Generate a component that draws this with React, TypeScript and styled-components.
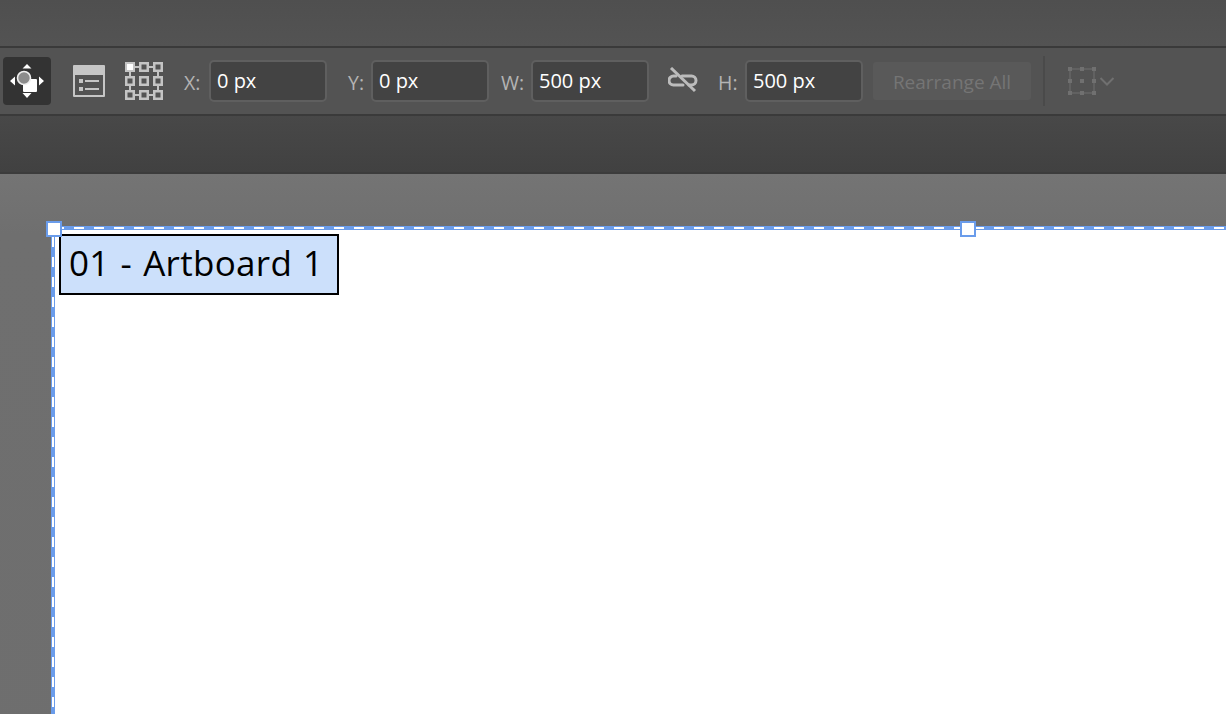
import React from "react";
import styled, { createGlobalStyle } from "styled-components";

const Global = createGlobalStyle`
  html, body { margin: 0; padding: 0; background: #6e6e6e; overflow: hidden; }
  #root { width: 1226px; height: 714px; }
`;

const Page = styled.div`
  width: 1226px;
  height: 714px;
  display: flex;
  flex-direction: column;
  overflow: hidden;
  font-family: "Open Sans", "Noto Sans", sans-serif;
`;

const TopBar = styled.div`
  height: 46px;
  flex: none;
  background: linear-gradient(#4f4f4f, #535353);
`;

const Toolbar = styled.div`
  height: 66px;
  flex: none;
  box-sizing: content-box;
  border-top: 2px solid #3a3a3a;
  border-bottom: 2px solid #3a3a3a;
  background: #535353;
  display: flex;
  align-items: center;
  padding-left: 3px;
`;

const Strip = styled.div`
  height: 56px;
  flex: none;
  background: linear-gradient(#484848, #414141);
  border-bottom: 2px solid #3c3c3c;
`;

const MoveButton = styled.div`
  width: 48px;
  height: 48px;
  flex: none;
  background: #333333;
  border-radius: 4px;
  display: flex;
  align-items: center;
  justify-content: center;
`;

const IconSlot = styled.div<{ $left: number; $w: number }>`
  margin-left: ${(p) => p.$left}px;
  width: ${(p) => p.$w}px;
  flex: none;
  display: flex;
  align-items: center;
  justify-content: center;
`;

const FieldLabel = styled.span<{ $left: number; $w: number }>`
  margin-left: ${(p) => p.$left}px;
  width: ${(p) => p.$w}px;
  flex: none;
  font-size: 19.5px;
  color: #b4b4b4;
  position: relative;
  top: 1px;
`;

const Field = styled.div`
  width: 118px;
  height: 42px;
  flex: none;
  box-sizing: border-box;
  border: 2px solid #5f5f5f;
  border-radius: 5px;
  background: #434343;
  color: #ffffff;
  font-size: 20px;
  line-height: 37px;
  padding-left: 6px;
`;

const DisabledButton = styled.div`
  margin-left: 10px;
  width: 158px;
  height: 38px;
  flex: none;
  background: #595959;
  border-radius: 3px;
  color: #757575;
  font-size: 19px;
  line-height: 40px;
  text-align: center;
`;

const Separator = styled.div`
  margin-left: 12px;
  width: 2px;
  height: 50px;
  flex: none;
  background: #4a4a4a;
`;

const Canvas = styled.div`
  flex: 1;
  position: relative;
  background: linear-gradient(#747474 0, #6f6f6f 60px, #6e6e6e 100%);
  padding: 55px 0 0 54px;
`;

const Artboard = styled.div`
  height: 600px;
  background: #ffffff;
  padding: 5px 0 0 5px;
`;

const BoardLabel = styled.div`
  width: 280px;
  height: 61px;
  box-sizing: border-box;
  border: 2px solid #000000;
  background: #cce0fb;
  color: #000000;
  font-size: 35px;
  line-height: 54px;
  padding-left: 8px;
  letter-spacing: 0.3px;
  word-spacing: 1.6px;
  white-space: nowrap;
`;

const SelectionH = styled.div`
  position: absolute;
  left: 54px;
  right: 0;
  top: 52px;
  height: 4px;
  background: #6a9ceb;
  &::after {
    content: "";
    position: absolute;
    left: 0;
    right: 0;
    top: 1px;
    height: 2px;
    background: repeating-linear-gradient(90deg, #ffffff 0 10px, transparent 10px 20px);
  }
`;

const SelectionV = styled.div`
  position: absolute;
  left: 51px;
  width: 4px;
  top: 55px;
  bottom: 0;
  background: #6a9ceb;
  &::after {
    content: "";
    position: absolute;
    top: 8px;
    bottom: 0;
    left: 1px;
    width: 2px;
    background: repeating-linear-gradient(180deg, #ffffff 0 10px, transparent 10px 20px);
  }
`;

const Handle = styled.div<{ $x: number }>`
  position: absolute;
  left: ${(p) => p.$x}px;
  top: 47px;
  width: 16px;
  height: 16px;
  box-sizing: border-box;
  border: 2px solid #6a9ceb;
  background: #ffffff;
`;

const MoveIcon = () => (
  <svg width="38" height="38" viewBox="0 0 38 38">
    <path d="M19 2l4.500 4.500h-9zM19 36l-4.500-5h9zM2 19l5-4.500v9zM36 19l-5 4.500v-9z" fill="#ffffff" />
    <rect x="15" y="17" width="14" height="13" rx="1" fill="#ffffff" />
    <circle cx="16" cy="16" r="6.500" fill="#8c8c8c" stroke="#f0f0f0" strokeWidth="1.600" />
  </svg>
);

const PanelIcon = () => (
  <svg width="32" height="32" viewBox="0 0 32 32">
    <rect x="0" y="0" width="32" height="32" rx="1" fill="#c6c6c6" />
    <rect x="2" y="10" width="28" height="20" fill="#535353" />
    <rect x="6" y="14" width="4" height="4" fill="#c6c6c6" />
    <rect x="6" y="22" width="4" height="4" fill="#c6c6c6" />
    <rect x="12" y="15" width="14" height="2" fill="#c6c6c6" />
    <rect x="12" y="23" width="14" height="2" fill="#c6c6c6" />
  </svg>
);

const GridIcon = () => {
  const pos = [0, 14, 28];
  return (
    <svg width="38" height="38" viewBox="0 0 38 38">
      <path
        d="M10 5h4M24 5h4M10 33h4M24 33h4M5 10v4M5 24v4M33 10v4M33 24v4"
        stroke="#c4c4c4"
        strokeWidth="2"
        fill="none"
      />
      {pos.map((y) =>
        pos.map((x) => (
          <rect
            key={`${x}-${y}`}
            x={x + 1.25}
            y={y + 1.25}
            width="7.5"
            height="7.5"
            fill="none"
            stroke="#c4c4c4"
            strokeWidth="2.5"
          />
        ))
      )}
      <rect x="0" y="0" width="10" height="10" fill="#c4c4c4" />
      <rect x="2" y="2" width="6" height="6" fill="#ffffff" />
    </svg>
  );
};

const LinkIcon = () => (
  <svg width="30" height="28" viewBox="0 0 30 28" fill="none" stroke="#bcbcbc" strokeWidth="3" strokeLinecap="round">
    <path d="M8 9H5.500a4.500 4.500 0 0 0 0 9H15M14 9h9.500a4.500 4.500 0 0 1 0 9H21" />
    <path d="M3 1l24 23" strokeLinecap="butt" />
  </svg>
);

const ArrangeIcon = () => (
  <svg width="48" height="32" viewBox="0 0 48 32" fill="none">
    <rect x="3" y="4" width="24" height="24" stroke="#707070" strokeWidth="1" />
    <path
      d="M1 2h4v4H1zM13 2h4v4h-4zM25 2h4v4h-4zM1 14h4v4H1zM13 14h4v4h-4zM25 14h4v4h-4zM1 26h4v4H1zM13 26h4v4h-4zM25 26h4v4h-4z"
      fill="#707070"
    />
    <path d="M33.500 13l6.500 6.500 6.500-6.500" stroke="#707070" strokeWidth="2" />
  </svg>
);

export default function App() {
  return (
    <Page>
      <Global />
      <TopBar />
      <Toolbar>
        <MoveButton>
          <MoveIcon />
        </MoveButton>
        <IconSlot $left={22} $w={32}>
          <PanelIcon />
        </IconSlot>
        <IconSlot $left={20} $w={38}>
          <GridIcon />
        </IconSlot>
        <FieldLabel $left={21} $w={25}>X:</FieldLabel>
        <Field>0 px</Field>
        <FieldLabel $left={21} $w={23}>Y:</FieldLabel>
        <Field>0 px</Field>
        <FieldLabel $left={12} $w={30}>W:</FieldLabel>
        <Field>500 px</Field>
        <IconSlot $left={19} $w={30}>
          <LinkIcon />
        </IconSlot>
        <FieldLabel $left={20} $w={27}>H:</FieldLabel>
        <Field>500 px</Field>
        <DisabledButton>Rearrange All</DisabledButton>
        <Separator />
        <IconSlot $left={22} $w={48}>
          <ArrangeIcon />
        </IconSlot>
      </Toolbar>
      <Strip />
      <Canvas>
        <Artboard>
          <BoardLabel>01 - Artboard 1</BoardLabel>
        </Artboard>
        <SelectionH />
        <SelectionV />
        <Handle $x={46} />
        <Handle $x={960} />
      </Canvas>
    </Page>
  );
}
